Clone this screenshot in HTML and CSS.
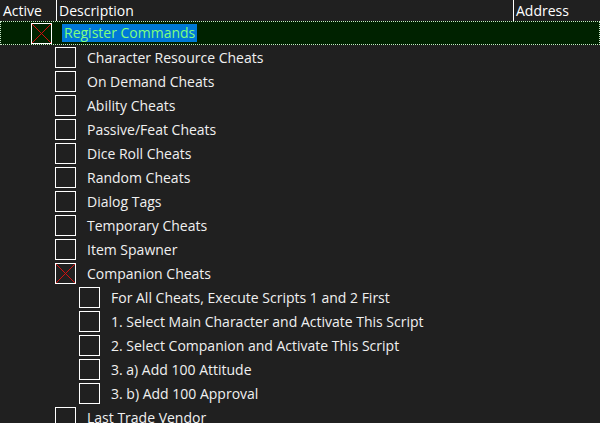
FILE: index.html
```html
<!DOCTYPE html>
<html>
<head>
<meta charset="utf-8">
<link rel="stylesheet" href="styles.css">
</head>
<body>
<div class="header">
  <div class="hcell col-active">Active</div>
  <div class="hcell col-desc">Description</div>
  <div class="hcell col-addr">Address</div>
</div>
<div class="tree">
  <div class="row selected lvl0">
    <span class="box checked"><svg viewBox="0 0 21 21" width="21" height="21"><line x1="1" y1="1" x2="20" y2="20"/><line x1="20" y1="1" x2="1" y2="20"/></svg></span>
    <span class="label sel">Register Commands</span>
  </div>
  <div class="row lvl1"><span class="box"></span><span class="label">Character Resource Cheats</span></div>
  <div class="row lvl1"><span class="box"></span><span class="label">On Demand Cheats</span></div>
  <div class="row lvl1"><span class="box"></span><span class="label">Ability Cheats</span></div>
  <div class="row lvl1"><span class="box"></span><span class="label">Passive/Feat Cheats</span></div>
  <div class="row lvl1"><span class="box"></span><span class="label">Dice Roll Cheats</span></div>
  <div class="row lvl1"><span class="box"></span><span class="label">Random Cheats</span></div>
  <div class="row lvl1"><span class="box"></span><span class="label">Dialog Tags</span></div>
  <div class="row lvl1"><span class="box"></span><span class="label">Temporary Cheats</span></div>
  <div class="row lvl1"><span class="box"></span><span class="label">Item Spawner</span></div>
  <div class="row lvl1"><span class="box checked"><svg viewBox="0 0 21 21" width="21" height="21"><line x1="1" y1="1" x2="20" y2="20"/><line x1="20" y1="1" x2="1" y2="20"/></svg></span><span class="label">Companion Cheats</span></div>
  <div class="row lvl2"><span class="box"></span><span class="label">For All Cheats, Execute Scripts 1 and 2 First</span></div>
  <div class="row lvl2"><span class="box"></span><span class="label">1. Select Main Character and Activate This Script</span></div>
  <div class="row lvl2"><span class="box"></span><span class="label">2. Select Companion and Activate This Script</span></div>
  <div class="row lvl2"><span class="box"></span><span class="label">3. a) Add 100 Attitude</span></div>
  <div class="row lvl2"><span class="box"></span><span class="label">3. b) Add 100 Approval</span></div>
  <div class="row lvl1"><span class="box"></span><span class="label">Last Trade Vendor</span></div>
</div>
</body>
</html>
```
FILE: styles.css
```css
html, body {
  margin: 0;
  padding: 0;
  background: #202020;
  overflow: hidden;
}
body {
  width: 600px;
  height: 423px;
  font-family: "Open Sans", "Noto Sans", sans-serif;
  font-size: 13px;
  color: #f0f0f0;
}
.header {
  display: flex;
  height: 21px;
  background: #202020;
}
.hcell {
  line-height: 21px;
  padding-left: 3px;
  box-sizing: border-box;
  color: #ffffff;
  font-size: 14px;
}
.col-active { width: 56px; }
.col-desc { width: 457px; border-left: 1px solid #ffffff; padding-left: 2px; }
.col-addr { flex: 1; border-left: 1px solid #ffffff; padding-left: 2px; }
.tree {
  display: flex;
  flex-direction: column;
}
.row {
  height: 24px;
  display: flex;
  align-items: center;
  box-sizing: border-box;
}
.lvl0 { padding-left: 31px; }
.lvl1 { padding-left: 55px; }
.lvl2 { padding-left: 79px; }
.row.selected {
  background: #002200;
  border: 1px dotted #c8e6c8;
  padding-left: 30px;
}
.box {
  width: 21px;
  height: 21px;
  box-sizing: border-box;
  border: 1px solid #ffffff;
  flex: none;
  position: relative;
}
.box svg {
  position: absolute;
  left: -1px;
  top: -1px;
}
.box svg line {
  stroke: #d01010;
  stroke-width: 1;
}
.label {
  margin-left: 11px;
  font-size: 14px;
  color: #f0f0f0;
  white-space: nowrap;
}
.label.sel {
  background: #0078d7;
  color: #7fff7f;
  margin-left: 10px;
  padding: 0 2px;
  line-height: 18px;
}
```
